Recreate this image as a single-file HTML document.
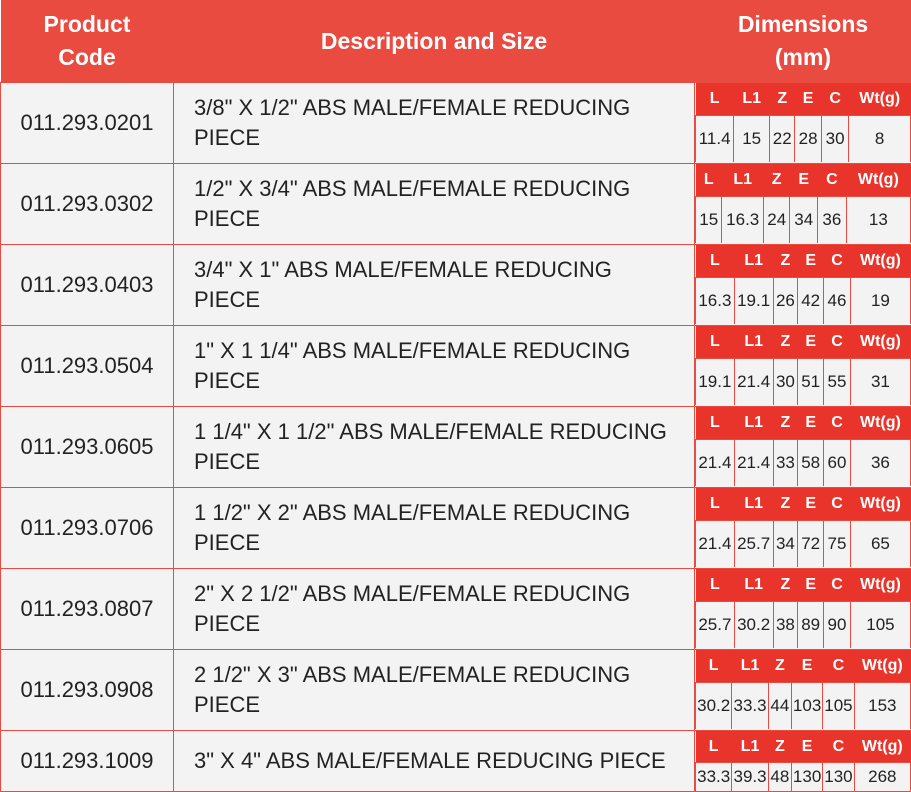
<!DOCTYPE html>
<html><head><style>
body{margin:0;background:#fff;font-family:"Liberation Sans",Arial,sans-serif;}
table.o{border-collapse:collapse;width:911px;table-layout:fixed;}
.o td{background:#f3f3f3;border:1px solid #e94b40;color:#222;font-size:22px;padding:0;height:80px;line-height:30px;}
.o th{background:#e94b40;color:#fff;font-size:23px;font-weight:bold;height:82px;padding:0;border:none;line-height:33px;}
.code{text-align:center;}
.o td.desc{padding-left:20px;}
table.i{border-collapse:collapse;width:100%;}
.o .i td{height:46px;font-size:17px;line-height:18px;text-align:center;border:1px solid #e94b40;border-bottom:none;padding:0;}
.o .i th{background:#e8342a;color:#fff;font-size:16px;height:32px;line-height:18px;border:none;padding:0 6px;}
.o td.dim{padding:0;vertical-align:top;}
.o tr.last > td{height:60px;}
.o tr.last .i td{height:28px;}
.o tr.last .i th{height:31px;}
</style></head><body>
<table class="o">
<colgroup><col style="width:173px"><col style="width:521px"><col style="width:217px"></colgroup>
<tr><th>Product<br>Code</th><th>Description and Size</th><th>Dimensions<br>(mm)</th></tr>
<tr><td class="code">011.293.0201</td><td class="desc">3/8" X 1/2" ABS MALE/FEMALE REDUCING<br>PIECE</td><td class="dim"><table class="i"><tr><th>L</th><th>L1</th><th>Z</th><th>E</th><th>C</th><th>Wt(g)</th></tr><tr><td>11.4</td><td>15</td><td>22</td><td>28</td><td>30</td><td>8</td></tr></table></td></tr>
<tr><td class="code">011.293.0302</td><td class="desc">1/2" X 3/4" ABS MALE/FEMALE REDUCING<br>PIECE</td><td class="dim"><table class="i"><tr><th>L</th><th>L1</th><th>Z</th><th>E</th><th>C</th><th>Wt(g)</th></tr><tr><td>15</td><td>16.3</td><td>24</td><td>34</td><td>36</td><td>13</td></tr></table></td></tr>
<tr><td class="code">011.293.0403</td><td class="desc">3/4" X 1" ABS MALE/FEMALE REDUCING<br>PIECE</td><td class="dim"><table class="i"><tr><th>L</th><th>L1</th><th>Z</th><th>E</th><th>C</th><th>Wt(g)</th></tr><tr><td>16.3</td><td>19.1</td><td>26</td><td>42</td><td>46</td><td>19</td></tr></table></td></tr>
<tr><td class="code">011.293.0504</td><td class="desc">1" X 1 1/4" ABS MALE/FEMALE REDUCING<br>PIECE</td><td class="dim"><table class="i"><tr><th>L</th><th>L1</th><th>Z</th><th>E</th><th>C</th><th>Wt(g)</th></tr><tr><td>19.1</td><td>21.4</td><td>30</td><td>51</td><td>55</td><td>31</td></tr></table></td></tr>
<tr><td class="code">011.293.0605</td><td class="desc">1 1/4" X 1 1/2" ABS MALE/FEMALE REDUCING<br>PIECE</td><td class="dim"><table class="i"><tr><th>L</th><th>L1</th><th>Z</th><th>E</th><th>C</th><th>Wt(g)</th></tr><tr><td>21.4</td><td>21.4</td><td>33</td><td>58</td><td>60</td><td>36</td></tr></table></td></tr>
<tr><td class="code">011.293.0706</td><td class="desc">1 1/2" X 2" ABS MALE/FEMALE REDUCING<br>PIECE</td><td class="dim"><table class="i"><tr><th>L</th><th>L1</th><th>Z</th><th>E</th><th>C</th><th>Wt(g)</th></tr><tr><td>21.4</td><td>25.7</td><td>34</td><td>72</td><td>75</td><td>65</td></tr></table></td></tr>
<tr><td class="code">011.293.0807</td><td class="desc">2" X 2 1/2" ABS MALE/FEMALE REDUCING<br>PIECE</td><td class="dim"><table class="i"><tr><th>L</th><th>L1</th><th>Z</th><th>E</th><th>C</th><th>Wt(g)</th></tr><tr><td>25.7</td><td>30.2</td><td>38</td><td>89</td><td>90</td><td>105</td></tr></table></td></tr>
<tr><td class="code">011.293.0908</td><td class="desc">2 1/2" X 3" ABS MALE/FEMALE REDUCING<br>PIECE</td><td class="dim"><table class="i"><tr><th>L</th><th>L1</th><th>Z</th><th>E</th><th>C</th><th>Wt(g)</th></tr><tr><td>30.2</td><td>33.3</td><td>44</td><td>103</td><td>105</td><td>153</td></tr></table></td></tr>
<tr class="last"><td class="code">011.293.1009</td><td class="desc">3" X 4" ABS MALE/FEMALE REDUCING PIECE</td><td class="dim"><table class="i"><tr><th>L</th><th>L1</th><th>Z</th><th>E</th><th>C</th><th>Wt(g)</th></tr><tr><td>33.3</td><td>39.3</td><td>48</td><td>130</td><td>130</td><td>268</td></tr></table></td></tr>
</table>
</body></html>
